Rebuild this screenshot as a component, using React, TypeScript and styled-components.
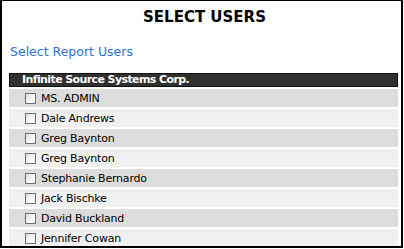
import styled, { createGlobalStyle } from "styled-components";

const GlobalStyle = createGlobalStyle`
  html, body {
    margin: 0;
    padding: 0;
    background: #ffffff;
  }
`;

const users = [
  "MS. ADMIN",
  "Dale Andrews",
  "Greg Baynton",
  "Greg Baynton",
  "Stephanie Bernardo",
  "Jack Bischke",
  "David Buckland",
  "Jennifer Cowan",
];

const Panel = styled.div`
  box-sizing: border-box;
  width: 403px;
  height: 248px;
  border-top: 1px solid #000;
  border-left: 2px solid #000;
  border-right: 2px solid #000;
  border-bottom: 2px solid #000;
  background: #fff;
  overflow: hidden;
  font-family: "DejaVu Sans", Verdana, sans-serif;
  display: flex;
  flex-direction: column;
  padding: 0 3px 0 7px;
`;

const Title = styled.h1`
  margin: 7px 0 0;
  text-align: center;
  font-size: 15px;
  font-weight: bold;
  color: #000;
  line-height: 18px;
  padding-left: 2px;
`;

const ReportLink = styled.a`
  display: block;
  margin: 18px 0 0 1px;
  font-size: 12.5px;
  line-height: 16px;
  color: #2f6fe0;
  text-decoration: none;
  cursor: pointer;
`;

const Group = styled.div`
  margin-top: 13px;
  display: flex;
  flex-direction: column;
  gap: 2px;
`;

const GroupHeader = styled.div`
  box-sizing: border-box;
  height: 14px;
  background: #303030;
  border: 1px solid #111;
  color: #fff;
  font-size: 11px;
  font-weight: bold;
  letter-spacing: -0.6px;
  line-height: 12px;
  padding-left: 12px;
  white-space: nowrap;
`;

const Row = styled.label<{ $shade: boolean }>`
  display: flex;
  align-items: center;
  height: 18px;
  background: ${(p) => (p.$shade ? "#dcdcdc" : "#f0f0f0")};
  padding-left: 16px;
  gap: 5px;
  font-size: 11px;
  letter-spacing: -0.2px;
  color: #000;
`;

const Check = styled.input`
  appearance: none;
  margin: 0;
  width: 11px;
  height: 11px;
  box-sizing: border-box;
  border: 1px solid #6f6f6f;
  background: linear-gradient(135deg, #dcdcdc 0%, #ffffff 70%);
`;

export default function App() {
  return (
    <>
      <GlobalStyle />
      <Panel>
        <Title>SELECT USERS</Title>
        <ReportLink>Select Report Users</ReportLink>
        <Group>
          <GroupHeader>Infinite Source Systems Corp.</GroupHeader>
          {users.map((name, i) => (
            <Row key={i} $shade={i % 2 === 0}>
              <Check type="checkbox" />
              {name}
            </Row>
          ))}
        </Group>
      </Panel>
    </>
  );
}
